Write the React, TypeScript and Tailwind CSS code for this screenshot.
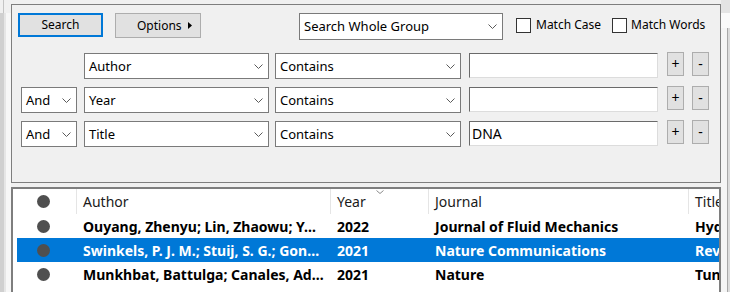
import React from "react";

function Chevron({ className = "" }: { className?: string }) {
  return (
    <svg width="9" height="5" viewBox="0 0 9 5" className={className}>
      <path d="M0.5 0.5 L4.5 4.5 L8.5 0.5" fill="none" stroke="#5a5a5a" strokeWidth="1" />
    </svg>
  );
}

function Combo({ text, w, h = "h-[26px]" }: { text: string; w: string; h?: string }) {
  return (
    <div className={`${w} ${h} flex items-center justify-between border border-[#7a7a7a] bg-white pl-[4px] pr-[5px] shrink-0`}>
      <span className="text-[13px] text-black leading-none whitespace-nowrap">{text}</span>
      <Chevron />
    </div>
  );
}

function Criteria({ and, field, value }: { and: boolean; field: string; value: string }) {
  return (
    <div className="flex items-start h-[26px] ml-[9px]">
      {and ? <Combo text="And" w="w-[56px]" /> : <div className="w-[56px] shrink-0" />}
      <div className="ml-[7px]">
        <Combo text={field} w="w-[185px]" />
      </div>
      <div className="ml-[6px]">
        <Combo text="Contains" w="w-[186px]" />
      </div>
      <div className="ml-[8px] w-[189px] h-[25px] bg-white border-t border-l border-t-[#6a6a6a] border-l-[#6a6a6a] border-r border-b border-r-[#dcdcdc] border-b-[#dcdcdc] flex items-center pl-[2px]">
        <span className="text-[14px] leading-none text-black">{value}</span>
      </div>
      <div className="ml-[9px] -mt-[1px] w-[17px] h-[24px] bg-[#e1e1e1] border border-[#adadad] flex items-center justify-center text-[14px] leading-none text-black">
        +
      </div>
      <div className="ml-[8px] -mt-[1px] w-[17px] h-[24px] bg-[#e1e1e1] border border-[#adadad] flex items-center justify-center text-[14px] leading-none text-black">
        -
      </div>
    </div>
  );
}

function Dot() {
  return <div className="w-[13px] h-[13px] rounded-full bg-[#4f4f4f] shrink-0" />;
}

const rows = [
  { author: "Ouyang, Zhenyu; Lin, Zhaowu; Yang, Jiaming", year: "2022", journal: "Journal of Fluid Mechanics", title: "Hydrodynamics", sel: false },
  { author: "Swinkels, P. J. M.; Stuij, S. G.; Gong, Z.", year: "2021", journal: "Nature Communications", title: "Revealing", sel: true },
  { author: "Munkhbat, Battulga; Canales, Adriana", year: "2021", journal: "Nature", title: "Tunable", sel: false },
];

export default function App() {
  return (
    <div className="w-[730px] h-[292px] overflow-hidden flex bg-[#f0f0f0] font-['Noto_Sans',sans-serif] text-black">
      {/* left strip */}
      <div className="w-[11px] flex flex-col shrink-0">
        <div className="h-[13px] flex">
          <div className="w-[3px] bg-[#f0f0f0]" />
          <div className="w-[1px] bg-[#c4c4c4]" />
          <div className="flex-1 bg-[#f0f0f0]" />
        </div>
        <div className="flex-1 flex">
          <div className="w-[4px] bg-[#d0d0d0]" />
          <div className="w-[2px] bg-[#e6e6e6]" />
          <div className="flex-1 bg-[#f7f7f7]" />
        </div>
      </div>

      {/* main column */}
      <div className="w-[710px] shrink-0 flex flex-col">
        {/* search panel */}
        <div className="mt-[4px] h-[179px] border border-[#7e7e7e] bg-[#f0f0f0] flex flex-col">
          <div className="mt-[8px] ml-[6px] flex items-start">
            <div className="w-[85px] h-[24px] border-2 border-[#0078d7] bg-[#e1e1e1] flex items-center justify-center text-[12px] leading-none">
              Search
            </div>
            <div className="ml-[12px] w-[86px] h-[25px] border border-[#adadad] bg-[#e1e1e1] flex items-center pl-[21px] text-[12px] leading-none">
              <span>Options</span>
              <svg width="4" height="7" viewBox="0 0 4 7" className="ml-[6px]">
                <path d="M0 0 L4 3.5 L0 7 Z" fill="#000" />
              </svg>
            </div>
            <div className="ml-[98px]">
              <Combo text="Search Whole Group" w="w-[204px]" h="h-[27px]" />
            </div>
            <div className="ml-[13px] h-[24px] flex items-center">
              <div className="w-[15px] h-[15px] border border-[#333333] bg-white" />
              <span className="ml-[5px] text-[12px] leading-none whitespace-nowrap">Match Case</span>
            </div>
            <div className="ml-[11px] h-[24px] flex items-center">
              <div className="w-[15px] h-[15px] border border-[#333333] bg-white" />
              <span className="ml-[4px] text-[12px] leading-none whitespace-nowrap">Match Words</span>
            </div>
          </div>
          <div className="mt-[13px] flex flex-col gap-[8px]">
            <Criteria and={false} field="Author" value="" />
            <Criteria and={true} field="Year" value="" />
            <Criteria and={true} field="Title" value="DNA" />
          </div>
        </div>

        {/* list */}
        <div className="mt-[4px] flex-1 border-t-2 border-l-2 border-r-2 border-[#7e7e7e] bg-white flex flex-col overflow-hidden">
          <div className="h-[25px] flex shrink-0 text-[14px] text-[#1a1a1a]">
            <div className="w-[64px] border-r border-[#e5e5e5] flex items-center">
              <div className="ml-[24px]">
                <Dot />
              </div>
            </div>
            <div className="w-[254px] border-r border-[#e5e5e5] flex items-center pl-[6px]">Author</div>
            <div className="relative w-[98px] border-r border-[#e5e5e5] flex items-center pl-[6px]">
              Year
              <svg width="8" height="4" viewBox="0 0 8 4" className="absolute top-[1px] left-[45px]">
                <path d="M0.5 0.5 L4 3.5 L7.5 0.5" fill="none" stroke="#8a8a8a" strokeWidth="1" />
              </svg>
            </div>
            <div className="w-[260px] border-r border-[#e5e5e5] flex items-center pl-[6px]">Journal</div>
            <div className="flex-1 flex items-center pl-[6px] overflow-hidden">Title</div>
          </div>
          <div className="pl-[4px] flex flex-col">
            {rows.map((r, i) => (
              <div
                key={i}
                className={`h-[24px] flex items-center text-[14px] font-bold whitespace-nowrap ${r.sel ? "bg-[#0078d7] text-white" : "text-black"}`}
              >
                <div className="w-[59px] flex items-center shrink-0">
                  <div className="ml-[20px]">
                    <Dot />
                  </div>
                </div>
                <div className="w-[254px] shrink-0 pl-[7px] pr-[6px] overflow-hidden text-ellipsis">{r.author}</div>
                <div className="w-[98px] shrink-0 pl-[7px]">{r.year}</div>
                <div className="w-[260px] shrink-0 pl-[7px] overflow-hidden">{r.journal}</div>
                <div className="flex-1 pl-[7px] overflow-hidden">{r.title}</div>
              </div>
            ))}
            <div className="h-[24px] flex items-center">
              <div className="w-[59px] flex items-center">
                <div className="ml-[20px]">
                  <Dot />
                </div>
              </div>
            </div>
          </div>
        </div>
      </div>

      {/* right strip */}
      <div className="flex-1 flex flex-col">
        <div className="h-[13px] bg-[#e4e4e4]" />
        <div className="h-[15px] bg-[#fafafa]" />
        <div className="flex-1 flex">
          <div className="w-[6px] bg-[#f5f5f5]" />
          <div className="w-[1px] bg-[#a8a8a8]" />
          <div className="flex-1 bg-[#dcdcdc]" />
        </div>
      </div>
    </div>
  );
}
